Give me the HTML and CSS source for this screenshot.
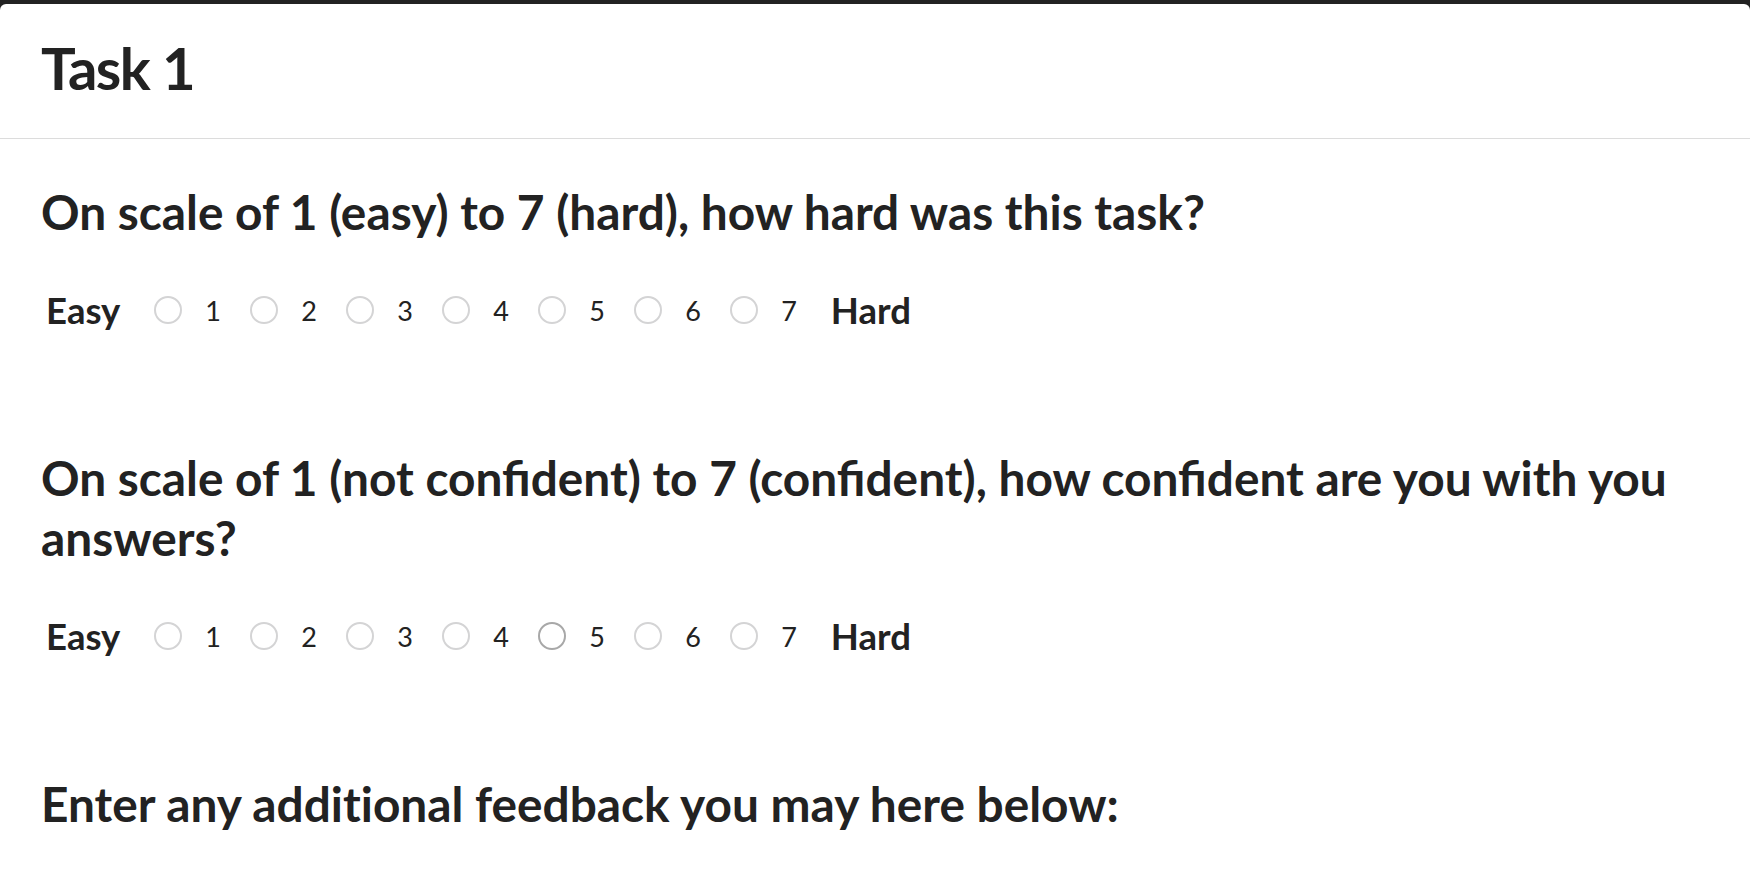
FILE: index.html
```html
<!DOCTYPE html>
<html lang="en">
<head>
    <meta charset="UTF-8">
    <meta name="viewport" content="width=device-width, initial-scale=1.0">
    <title>Task 1</title>
    <link rel="stylesheet" href="styles.css">
</head>
  <body>
    <main class="modal">

      <div class="header">Task 1</div>

      <div class="content">

        <section class="question">
          <h2>On scale of 1 (easy) to 7 (hard), how hard was this task?</h2>
          <div class="scale">
            <span class="end start">Easy</span>
            <label class="option"><input type="radio" name="difficulty" value="1"><span>1</span></label>
            <label class="option"><input type="radio" name="difficulty" value="2"><span>2</span></label>
            <label class="option"><input type="radio" name="difficulty" value="3"><span>3</span></label>
            <label class="option"><input type="radio" name="difficulty" value="4"><span>4</span></label>
            <label class="option"><input type="radio" name="difficulty" value="5"><span>5</span></label>
            <label class="option"><input type="radio" name="difficulty" value="6"><span>6</span></label>
            <label class="option"><input type="radio" name="difficulty" value="7"><span>7</span></label>
            <span class="end">Hard</span>
          </div>
        </section>

        <section class="question">
          <h2>On scale of 1 (not confident) to 7 (confident), how confident are you with you answers?</h2>
          <div class="scale">
            <span class="end start">Easy</span>
            <label class="option"><input type="radio" name="confidence" value="1"><span>1</span></label>
            <label class="option"><input type="radio" name="confidence" value="2"><span>2</span></label>
            <label class="option"><input type="radio" name="confidence" value="3"><span>3</span></label>
            <label class="option"><input type="radio" name="confidence" value="4"><span>4</span></label>
            <label class="option hover"><input type="radio" name="confidence" value="5"><span>5</span></label>
            <label class="option"><input type="radio" name="confidence" value="6"><span>6</span></label>
            <label class="option"><input type="radio" name="confidence" value="7"><span>7</span></label>
            <span class="end">Hard</span>
          </div>
        </section>

        <section class="question">
          <h2>Enter any addit&zwnj;ional feedback you may here below:</h2>
        </section>

      </div>

    </main>
  </body>
</html>
```

FILE: styles.css
```css
* {
  margin: 0;
  padding: 0;
  box-sizing: border-box;
}

html {
  font-family: "Lato", "Noto Sans", "Helvetica", sans-serif;
  background-color: #222222;
  height: 100%;
}

body {
  height: 100%;
  padding-top: 4px;
  overflow: hidden;
}

.modal {
  background-color: #ffffff;
  color: #222222;
  height: 100%;
  border-radius: 6px 6px 0 0;
}

.header {
  padding: 28px 41px 34px;
  font-size: 58px;
  font-weight: 700;
  line-height: 72px;
  letter-spacing: -1.5px;
  border-bottom: 1px solid #dcdcdc;
}

.content {
  padding: 43px 41px 0;
}

.question h2 {
  font-size: 47.8px;
  font-weight: 700;
  line-height: 60px;
  margin-bottom: 48px;
}

.scale {
  display: flex;
  align-items: center;
  height: 40px;
  margin-bottom: 118px;
  padding-left: 5px;
}

.scale .end {
  font-size: 36.5px;
  font-weight: 700;
}

.scale .start {
  margin-right: 34px;
}

.option {
  display: flex;
  align-items: center;
  gap: 23px;
  margin-right: 29.3px;
  font-size: 27px;
  cursor: pointer;
}

.option:nth-last-child(2) {
  margin-right: 34px;
}

.option input {
  appearance: none;
  -webkit-appearance: none;
  width: 28px;
  height: 28px;
  border: 2px solid #d4d4d5;
  border-radius: 50%;
  background-color: #ffffff;
  margin: 0;
}

.option.hover input,
.option input:hover {
  border-color: #a8a8a8;
}

.option input:checked {
  border-color: #a8a8a8;
  background: radial-gradient(circle, #222 0 30%, #fff 32%);
}
```
